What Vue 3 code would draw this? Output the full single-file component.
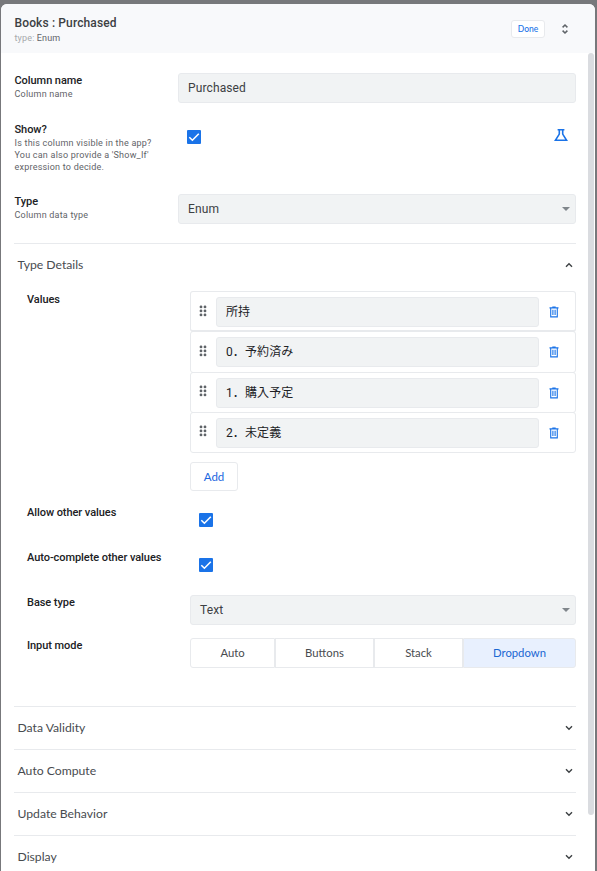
<script setup>
import { ref } from "vue";

const columnName = ref("Purchased")
const show = ref(true)
const allowOther = ref(true)
const autoComplete = ref(true)
const inputMode = ref("Dropdown")
const detailsOpen = ref(true)

const values = ref(["所持", "0．予約済み", "1．購入予定", "2．未定義"])
const modes = ["Auto", "Buttons", "Stack", "Dropdown"]
const sections = ["Data Validity", "Auto Compute", "Update Behavior", "Display"]

const addValue = () => {
    values.value.push("")
}
const removeValue = (index) => {
    values.value.splice(index, 1)
}
</script>


<template>
    <div class="backdrop">
        <div class="dialog">
            <!-- HEADER -->
            <header class="dialog-header">
                <div class="heading">
                    <h1>Books : Purchased</h1>
                    <p>type: <span>Enum</span></p>
                </div>
                <button class="done">Done</button>
                <svg class="expand" viewBox="0 0 8 12"><path d="M1.6 4.4 4 2l2.4 2.4M1.6 7.6 4 10l2.4-2.4" /></svg>
            </header>

            <div class="dialog-body">
                <div class="content">
                    <!-- COLUMN NAME -->
                    <div class="field name-field">
                        <div class="label">
                            <h2>Column name</h2>
                            <p>Column name</p>
                        </div>
                        <input v-model="columnName" class="box" type="text">
                    </div>
                    <!-- SHOW -->
                    <div class="field show-field">
                        <div class="label">
                            <h2>Show?</h2>
                            <p>Is this column visible in the app?<br>You can also provide a 'Show_If'<br>expression to decide.</p>
                        </div>
                        <button class="check" :class="{ on: show }" @click="show = !show">
                            <svg viewBox="0 0 14 14"><path d="M2.3 7.2 5.4 10.2 11.8 3.8" /></svg>
                        </button>
                        <svg class="flask" viewBox="0 0 14 12"><path d="M3.6.8h6.8M5.3.8v4.3L1.4 11.2h11.2L8.7 5.1V.8" /></svg>
                    </div>
                    <!-- TYPE -->
                    <div class="field type-field">
                        <div class="label">
                            <h2>Type</h2>
                            <p>Column data type</p>
                        </div>
                        <div class="box select">Enum<i class="arrow"></i></div>
                    </div>

                    <!-- TYPE DETAILS -->
                    <div class="section" @click="detailsOpen = !detailsOpen">
                        <span>Type Details</span>
                        <svg class="chevron" :class="{ up: detailsOpen }" viewBox="0 0 8 6"><path d="M1 1.2 4 4.2l3-3" /></svg>
                    </div>
                    <div v-if="detailsOpen" class="details">
                        <div class="field values-field">
                            <h2>Values</h2>
                            <div class="control">
                                <div v-for="(value, index) in values" :key="index" class="value-row">
                                    <svg class="grip" viewBox="0 0 8 12">
                                        <circle v-for="n in 6" :key="n" :cx="n % 2 ? 2 : 6" :cy="1.9 + Math.floor((n - 1) / 2) * 4" r="1.4" />
                                    </svg>
                                    <input v-model="values[index]" class="box" type="text">
                                    <svg class="trash" viewBox="0 0 10 12" @click="removeValue(index)">
                                        <path d="M.5 1.9h9M3.3 1.1h3.4M1.7 2v8.9h6.6V2M3.9 3.8v5.2M6.1 3.8v5.2" />
                                    </svg>
                                </div>
                                <button class="add" @click="addValue">Add</button>
                            </div>
                        </div>
                        <div class="field check-field">
                            <h2>Allow other values</h2>
                            <button class="check" :class="{ on: allowOther }" @click="allowOther = !allowOther">
                                <svg viewBox="0 0 14 14"><path d="M2.3 7.2 5.4 10.2 11.8 3.8" /></svg>
                            </button>
                        </div>
                        <div class="field check-field">
                            <h2>Auto-complete other values</h2>
                            <button class="check" :class="{ on: autoComplete }" @click="autoComplete = !autoComplete">
                                <svg viewBox="0 0 14 14"><path d="M2.3 7.2 5.4 10.2 11.8 3.8" /></svg>
                            </button>
                        </div>
                        <div class="field base-field">
                            <h2>Base type</h2>
                            <div class="box select">Text<i class="arrow"></i></div>
                        </div>
                        <div class="field mode-field">
                            <h2>Input mode</h2>
                            <div class="modes">
                                <button v-for="mode in modes" :key="mode" :class="[mode.toLowerCase(), { active: mode === inputMode }]" @click="inputMode = mode">{{ mode }}</button>
                            </div>
                        </div>
                    </div>

                    <!-- COLLAPSED SECTIONS -->
                    <div v-for="section in sections" :key="section" class="section">
                        <span>{{ section }}</span>
                        <svg class="chevron" viewBox="0 0 8 6"><path d="M1 1.2 4 4.2l3-3" /></svg>
                    </div>
                </div>
                <div class="scrollbar"></div>
            </div>
        </div>
    </div>
</template>


<style>
body {
  margin: 0;
  overflow: hidden;
}
</style>

<style scoped>
* {
  box-sizing: border-box;
}

.backdrop {
  height: 871px;
  padding: 4px 2px 0 1px;
  overflow: hidden;
  background: #77787b;
  font-family: Roboto, "Noto Sans CJK JP", sans-serif;
  color: #3c4043;
}

.dialog {
  height: 875px;
  border-radius: 6px;
  overflow: hidden;
  background: #fff;
}

.dialog-header {
  display: flex;
  align-items: flex-start;
  height: 49px;
  padding: 0 26px 0 13.5px;
  background: #f8f9fb;
}

.heading {
  flex: 1;
  padding-top: 11px;
}

h1, h2, p {
  margin: 0;
}

h1 {
  font: 500 12px/16px Roboto, sans-serif;
  letter-spacing: 0.13px;
}

.heading p {
  margin-top: 1px;
  font-size: 9px;
  line-height: 12px;
  letter-spacing: 0.15px;
  color: #a6a9ad;
}

.heading p span {
  color: #5f6368;
}

button {
  padding: 0;
  font-family: Lato, sans-serif;
  background: #fff;
  border: 1px solid #e8eaed;
  border-radius: 3px;
  cursor: pointer;
}

.done {
  width: 34px;
  height: 18px;
  margin: 16px 16px 0 0;
  font-size: 8.5px;
  line-height: 14px;
  font-weight: 500;
  color: #1a73e8;
}

svg {
  display: block;
  flex: none;
  fill: none;
}

.expand {
  width: 8px;
  height: 12px;
  margin-top: 19px;
  stroke: #5f6368;
  stroke-width: 1.5;
}

.dialog-body {
  display: flex;
  height: 826px;
}

.content {
  width: 562px;
  margin: 20px 12px 0 13px;
}

.scrollbar {
  width: 6px;
  height: 762px;
  border-radius: 3px;
  background: #dadce0;
}

.field {
  display: flex;
  align-items: flex-start;
}

.label {
  width: 164px;
  padding: 1px 0 0 0.5px;
}

h2 {
  font-size: 11px;
  line-height: 14px;
  font-weight: 500;
  letter-spacing: -0.06px;
  color: #202124;
}

.label p {
  font-size: 9px;
  line-height: 12px;
  letter-spacing: 0.22px;
  white-space: nowrap;
  color: #5f6368;
}

.name-field, .type-field {
  height: 49px;
}

.show-field {
  height: 72px;
}

.box {
  flex: 1;
  min-width: 0;
  height: 30px;
  padding: 0 9px;
  border: 1px solid #e8eaed;
  border-radius: 3px;
  background: #f1f3f4;
  font: 12px/28px Roboto, "Noto Sans CJK JP", sans-serif;
  letter-spacing: 0.12px;
  color: #3c4043;
  outline: none;
}

.value-row .box {
  padding-bottom: 3px;
  color: #202124;
}

.select {
  display: flex;
  align-items: center;
  justify-content: space-between;
  padding-right: 5px;
}

.arrow {
  border: 4px solid transparent;
  border-top-color: #80868b;
  border-bottom: 0;
}

.check {
  width: 14px;
  height: 14px;
  border: 1px solid #5f6368;
  border-radius: 1px;
}

.check.on {
  border: 0;
  background: #1a73e8;
}

.check svg {
  width: 14px;
  height: 14px;
  stroke: #fff;
  stroke-width: 1.6;
}

.show-field .check {
  margin: 8px 0 0 9px;
}

.flask {
  width: 14px;
  height: 12px;
  margin: 7px 8px 0 auto;
  stroke: #1a73e8;
  stroke-width: 1.6;
}

.section {
  display: flex;
  align-items: center;
  justify-content: space-between;
  height: 43px;
  padding: 0 3px 0 3.5px;
  border-top: 1px solid #e8eaed;
  font-family: Lato, sans-serif;
  font-size: 12.2px;
  color: #484b4f;
  cursor: pointer;
}

.section span {
  padding-bottom: 1px;
}

.chevron {
  width: 8px;
  height: 6px;
  stroke: #3c4043;
  stroke-width: 1.4;
}

.chevron.up {
  transform: rotate(180deg);
}

.details {
  height: 420px;
  padding: 5px 0 0 13px;
}

.details h2 {
  width: 163px;
  padding-top: 2px;
}

.values-field {
  height: 213px;
}

.control {
  flex: 1;
}

.value-row {
  display: flex;
  align-items: flex-start;
  height: 41.33px;
  margin-bottom: -1px;
  padding: 5px 16px 0 8px;
  border: 1px solid #e8eaed;
  border-radius: 3px;
}

.value-row:first-child {
  border-bottom-width: 2px;
}

.grip {
  width: 8px;
  height: 12px;
  margin: 7.5px 9px 0 0;
  fill: #5f6368;
}

.trash {
  width: 10px;
  height: 12px;
  margin: 9px 0 0 10px;
  stroke: #1a73e8;
  stroke-width: 1.1;
  cursor: pointer;
}

.add {
  display: block;
  width: 48px;
  height: 29px;
  margin-top: 10px;
  padding-bottom: 1px;
  font-size: 11.5px;
  color: #1a66e0;
}

.check-field {
  height: 45px;
}

.check-field .check {
  margin: 9px 0 0 9px;
}

.base-field {
  height: 43px;
  margin-top: 1px;
}

.base-field h2,
.mode-field h2 {
  padding-top: 1px;
}

.modes {
  display: flex;
  flex: 1;
  height: 30px;
}

.modes button {
  padding-bottom: 2px;
  border-radius: 0;
  font-size: 11.3px;
  color: #484b4f;
}

.modes .auto {
  width: 85px;
  border-radius: 3px 0 0 3px;
}

.modes .buttons {
  width: 99px;
}

.modes .stack {
  width: 89px;
}

.modes .dropdown {
  width: 113px;
  border-radius: 0 3px 3px 0;
}

.modes .active {
  background: #e8f0fe;
  color: #1967d2;
}
</style>
